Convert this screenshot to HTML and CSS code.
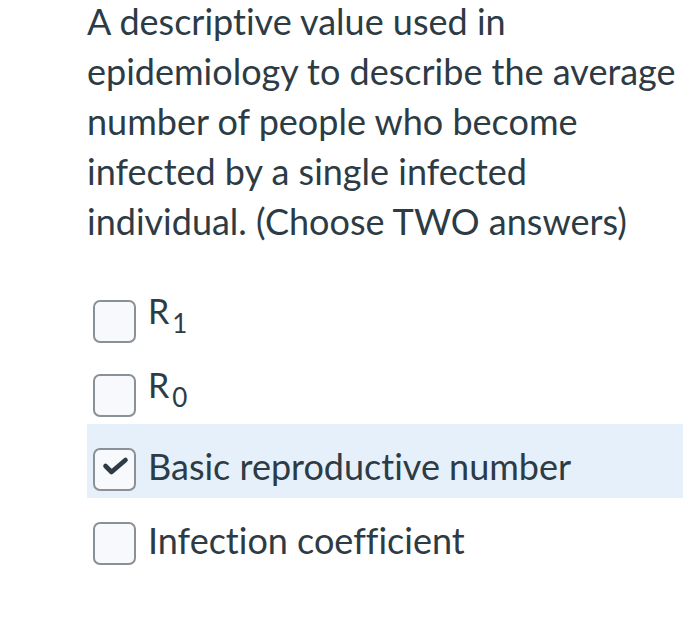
FILE: index.html
```html
<!DOCTYPE html>
<html>
<head>
<meta charset="utf-8">
<link rel="stylesheet" href="styles.css">
</head>
<body>
<div class="question">
  <p class="prompt">A descriptive value used in epidemiology to describe the average number of people who become infected by a single infected individual. (Choose TWO answers)</p>
  <ul class="options">
    <li class="option"><span class="box"></span><span class="label math">R<sub>1</sub></span></li>
    <li class="option"><span class="box"></span><span class="label math">R<sub>0</sub></span></li>
    <li class="option selected"><span class="box"><svg class="check" viewBox="0 0 39 39" width="39" height="39"><path d="M10.5 16 L16.5 22 L30.5 10" fill="none" stroke="#2d3b45" stroke-width="4.6" stroke-linecap="round" stroke-linejoin="round"/></svg></span><span class="label">Basic reproductive number</span></li>
    <li class="option"><span class="box"></span><span class="label">Infection coefficient</span></li>
  </ul>
</div>
</body>
</html>
```
FILE: styles.css
```css
html, body {
  margin: 0;
  padding: 0;
  background: #ffffff;
}
body {
  font-family: Lato, "Liberation Sans", sans-serif;
  color: #2d3b45;
  font-variant-ligatures: none;
}
.question {
  padding: 0 17px 0 87px;
}
.prompt {
  margin: -4px 0 0 0;
  font-size: 36px;
  line-height: 50px;
  width: 600px;
}
.options {
  list-style: none;
  margin: 30px 0 0 0;
  padding: 0;
}
.option {
  display: flex;
  align-items: flex-start;
  height: 74px;
  padding-left: 6px;
}
.option.selected {
  background: #e5f0fb;
}
.box {
  margin-top: 24px;
  width: 39px;
  height: 39px;
  border: 2px solid #8a9196;
  border-radius: 7px;
  background: #f8f9fc;
  flex: none;
}
.check {
  display: block;
}
.label {
  margin-left: 12px;
  margin-top: 22px;
  font-size: 36px;
  line-height: 40px;
}
.label.math {
  margin-top: 15px;
  font-size: 34px;
}
.label sub {
  font-size: 26px;
  vertical-align: -9px;
  line-height: 0;
  margin-left: 3px;
}
```
